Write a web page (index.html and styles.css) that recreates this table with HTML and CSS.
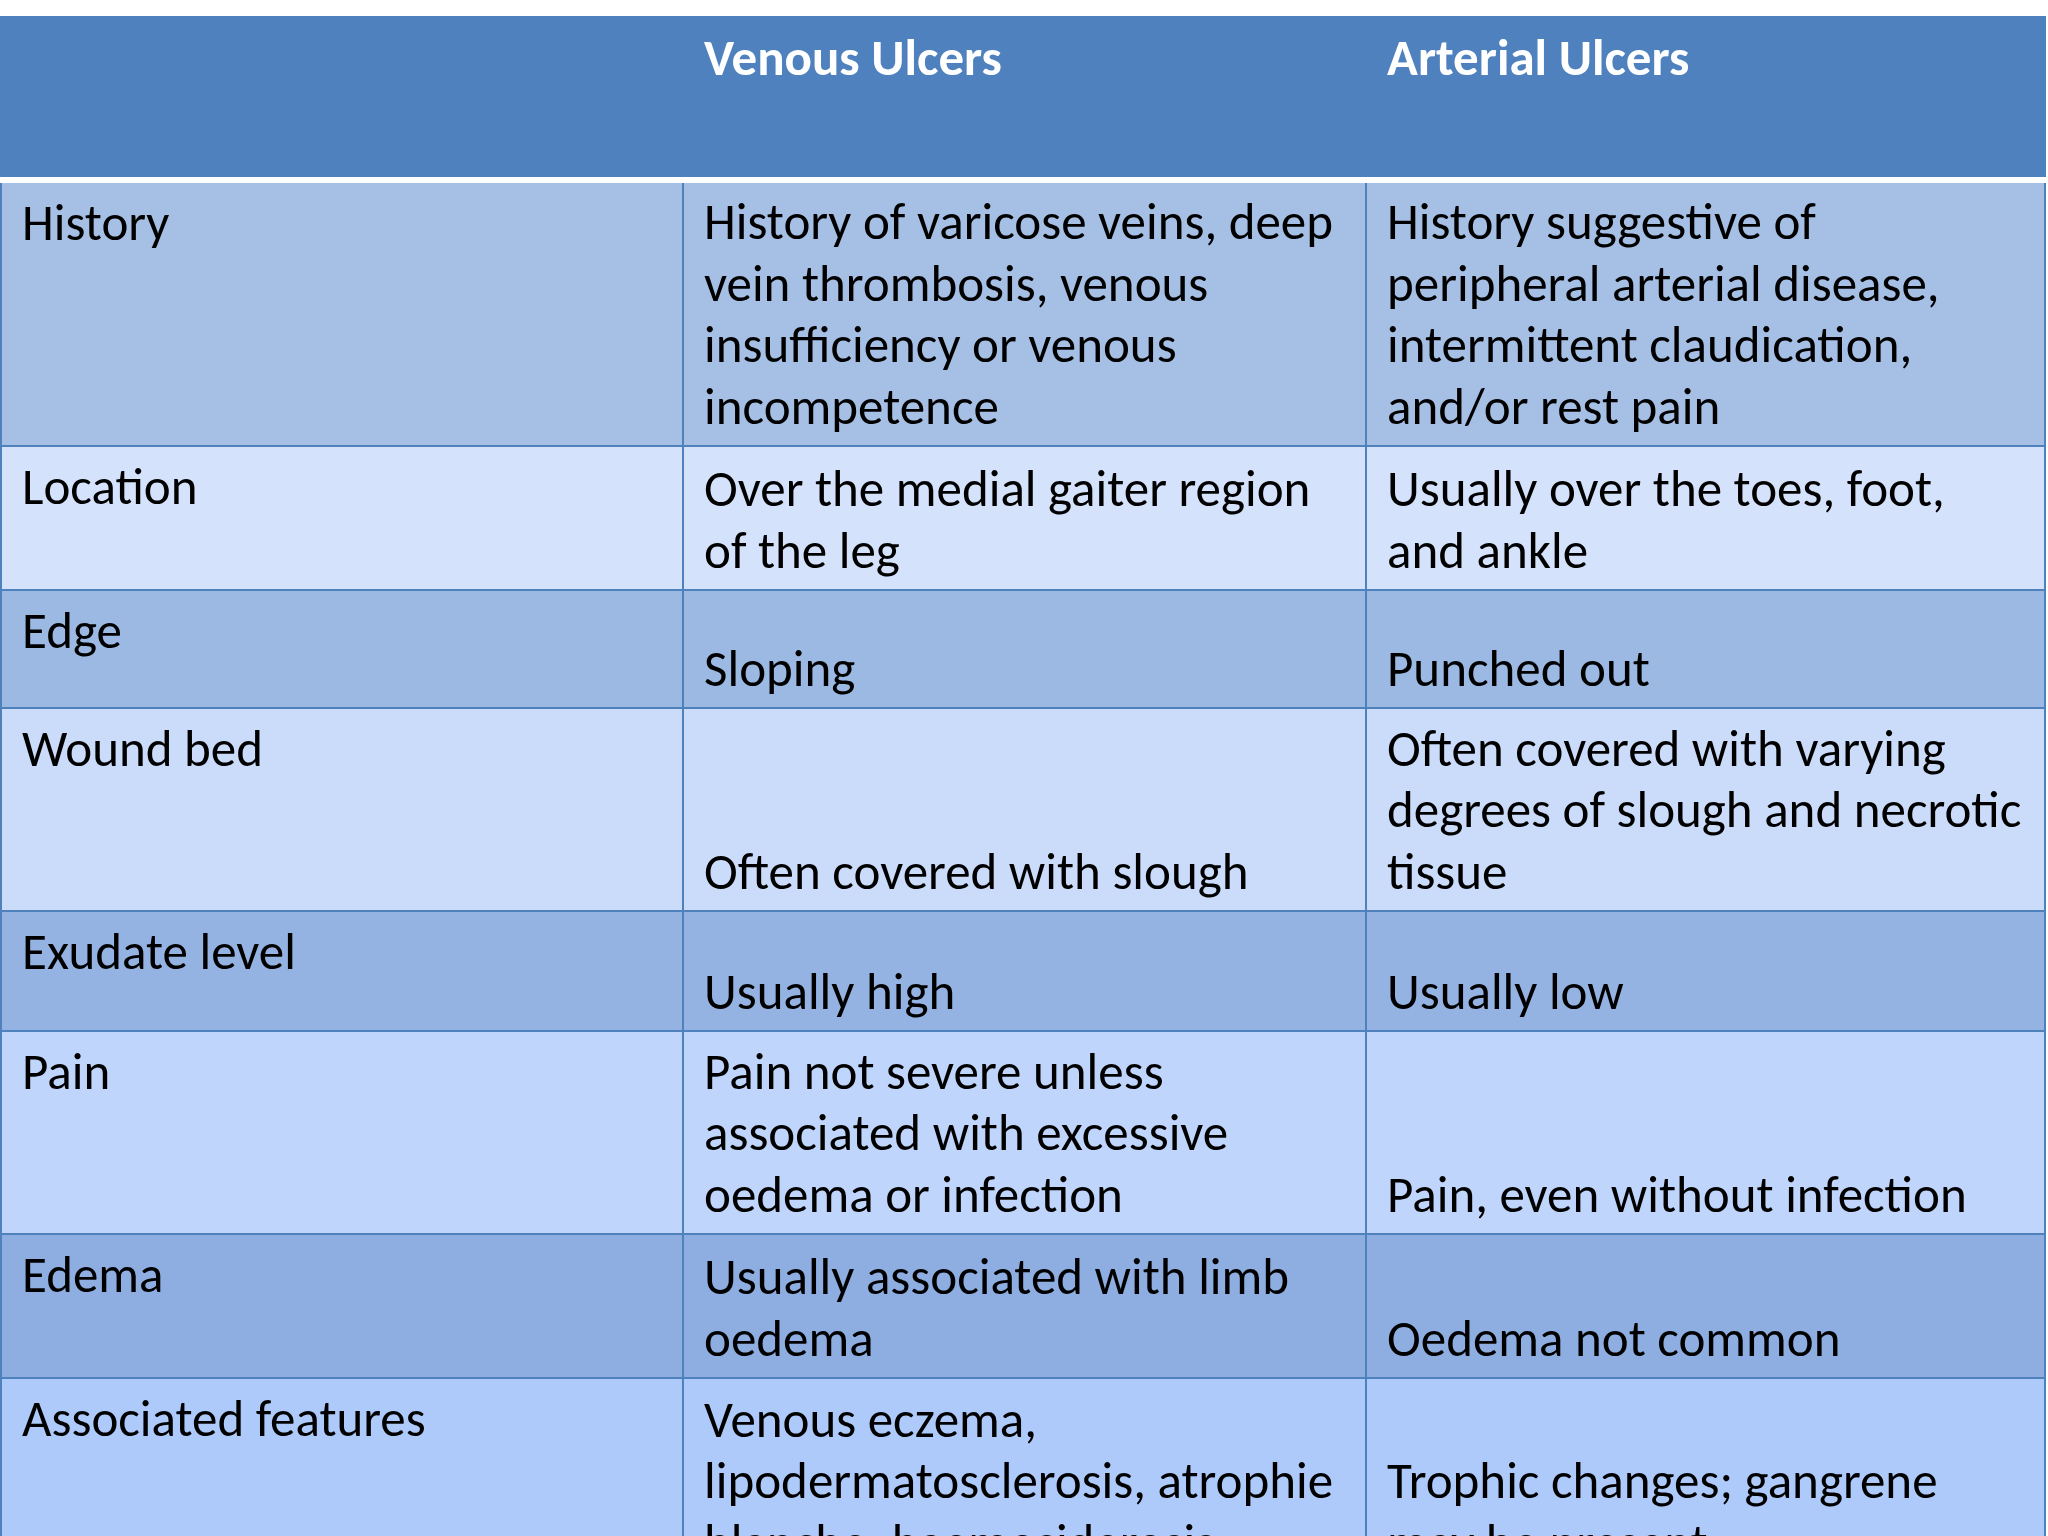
FILE: index.html
```html
<!DOCTYPE html>
<html lang="en">
<head>
<meta charset="utf-8">
<title>Venous vs Arterial Ulcers</title>
<link rel="stylesheet" href="styles.css">
</head>
<body>
<div class="sheet">
  <div class="head">
    <div class="hcell"></div>
    <div class="hcell">Venous Ulcers</div>
    <div class="hcell">Arterial Ulcers</div>
  </div>
  <div class="grid">
    <div class="cell r1">History</div>
    <div class="cell r1 bottom">History of varicose veins, deep<br>vein thrombosis, venous<br>insufficiency or venous<br>incompetence</div>
    <div class="cell r1 bottom">History suggestive of<br>peripheral arterial disease,<br>intermittent claudication,<br>and/or rest pain</div>

    <div class="cell r2">Location</div>
    <div class="cell r2 bottom">Over the medial gaiter region<br>of the leg</div>
    <div class="cell r2 bottom">Usually over the toes, foot,<br>and ankle</div>

    <div class="cell r3">Edge</div>
    <div class="cell r3 bottom">Sloping</div>
    <div class="cell r3 bottom">Punched out</div>

    <div class="cell r4">Wound bed</div>
    <div class="cell r4 bottom">Often covered with slough</div>
    <div class="cell r4 bottom">Often covered with varying<br>degrees of slough and necrotic<br>tissue</div>

    <div class="cell r5">Exudate level</div>
    <div class="cell r5 bottom">Usually high</div>
    <div class="cell r5 bottom">Usually low</div>

    <div class="cell r6">Pain</div>
    <div class="cell r6 bottom">Pain not severe unless<br>associated with excessive<br>oedema or infection</div>
    <div class="cell r6 bottom">Pain, even without infection</div>

    <div class="cell r7">Edema</div>
    <div class="cell r7 bottom">Usually associated with limb<br>oedema</div>
    <div class="cell r7 bottom">Oedema not common</div>

    <div class="cell r8">Associated features</div>
    <div class="cell r8 bottom">Venous eczema,<br>lipodermatosclerosis, atrophie<br>blanche, haemosiderosis</div>
    <div class="cell r8 bottom">Trophic changes; gangrene<br>may be present</div>
  </div>
</div>
</body>
</html>
```
FILE: styles.css
```css
html, body {
  margin: 0;
  padding: 0;
  background: #ffffff;
}
body {
  height: 1536px;
  overflow: hidden;
  font-family: Carlito, "Liberation Sans", sans-serif;
  font-size: 51px;
  line-height: 61.5px;
  color: #000000;
}
.sheet {
  width: 2046px;
  padding-top: 16px;
}
.head {
  display: grid;
  grid-template-columns: 682px 683px 681px;
  height: 161px;
  background: #4f81bf;
}
.hcell {
  padding: 11px 0 0 22px;
  color: #ffffff;
  font-weight: bold;
  white-space: nowrap;
}
.grid {
  margin-top: 6px;
  display: grid;
  grid-template-columns: 680px 681px 677px;
  grid-template-rows: 262px 142px 116px 201px 118px 201px 142px 202px;
  column-gap: 2px;
  row-gap: 2px;
  padding: 0 2px 2px 2px;
  background: #4f81bd;
}
.cell {
  display: flex;
  flex-direction: column;
  justify-content: flex-start;
  padding: 9px 0 8px 20px;
  white-space: nowrap;
  overflow: hidden;
}
.cell.bottom {
  justify-content: flex-end;
}
.r1 { background: #a6bfe4; }
.r2 { background: #d4e2fb; }
.r3 { background: #9cb9e3; }
.r4 { background: #cbdcfb; }
.r5 { background: #95b3e2; }
.r6 { background: #c0d5fb; }
.r7 { background: #8eaee2; }
.r8 { background: #aecafb; }
```
